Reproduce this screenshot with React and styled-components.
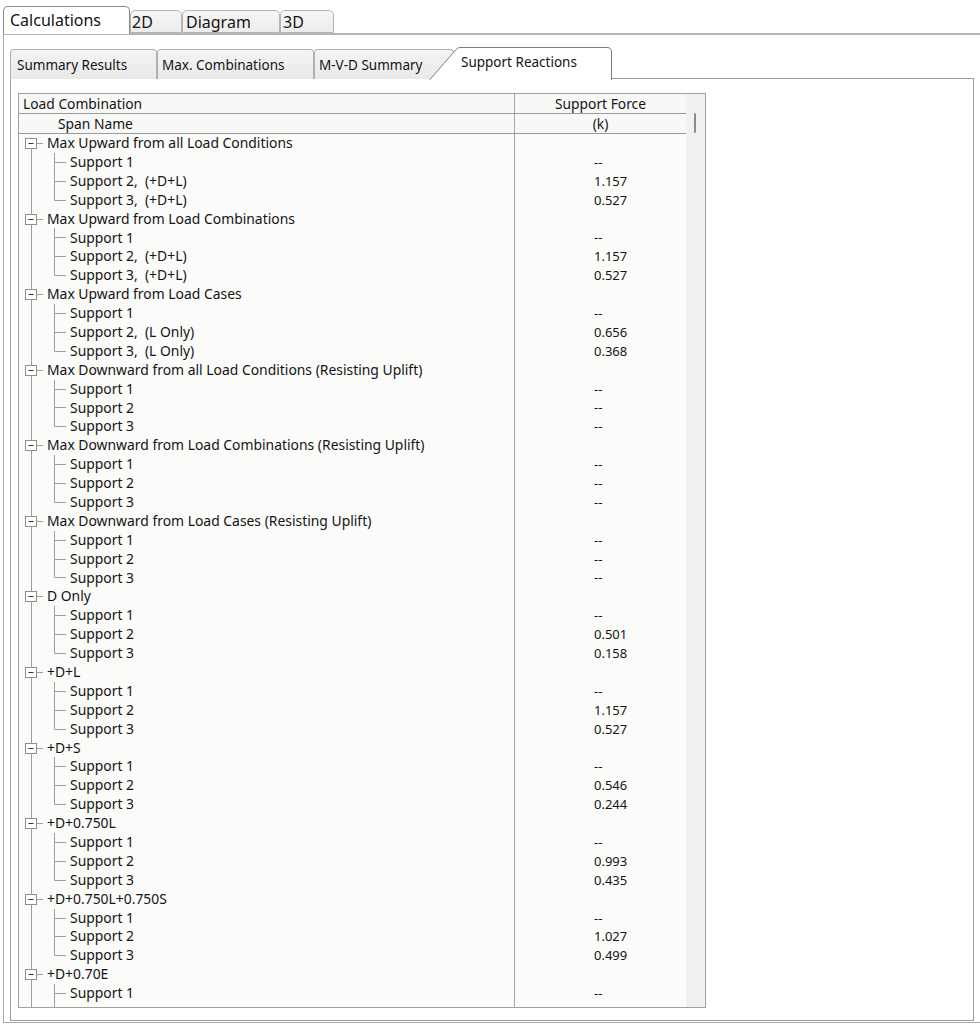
import styled, { createGlobalStyle } from "styled-components";

const GlobalStyle = createGlobalStyle`
  html, body {
    margin: 0;
    background: #ffffff;
  }
  body {
    font-family: "Noto Sans", "Open Sans", sans-serif;
    color: #141414;
  }
`;

const Window = styled.div`
  width: 980px;
  height: 1029px;
  padding: 6px 0 0 3px;
  box-sizing: border-box;
  overflow: hidden;
`;

const TopTabs = styled.div`
  display: flex;
  align-items: flex-end;
  height: 27px;
`;

const TopTab = styled.div`
  height: ${(p) => (p.$active ? "28px" : "23px")};
  width: ${(p) => p.$w}px;
  box-sizing: border-box;
  padding: 0 0 0 ${(p) => p.$pad}px;
  margin-bottom: ${(p) => (p.$active ? "-1px" : "0")};
  border: 1px solid ${(p) => (p.$active ? "#8c8c8c" : "#b4b4b4")};
  border-bottom: ${(p) => (p.$active ? "none" : "1px solid #b4b4b4")};
  border-radius: 5px 5px 0 0;
  background: ${(p) => (p.$active ? "#ffffff" : "linear-gradient(#f6f6f6, #ececec)")};
  font-size: 16px;
  line-height: ${(p) => (p.$active ? "26px" : "23px")};
  white-space: nowrap;
  position: relative;
  z-index: ${(p) => (p.$active ? 2 : 1)};
`;

const OuterPanel = styled.div`
  border: 1px solid #a8a8a8;
  border-top: 2px solid #b4b4b4;
  border-right: none;
  height: 990px;
  padding: 12px 0 0 6px;
  box-sizing: border-box;
`;

const InnerTabs = styled.div`
  display: flex;
  align-items: flex-end;
  height: 32px;
  position: relative;
  z-index: 2;
`;

const InnerTab = styled.div`
  width: ${(p) => p.$w}px;
  height: 30px;
  box-sizing: border-box;
  padding-left: ${(p) => p.$pad}px;
  border: 1px solid #b0b0b0;
  border-bottom: none;
  border-radius: 4px 4px 0 0;
  background: linear-gradient(#f4f4f4, #e9e9e9);
  font-size: 13.5px;
  line-height: 30px;
  white-space: nowrap;
  overflow: hidden;
  margin-right: ${(p) => p.$overlap || 0}px;
`;

const ActiveTab = styled.div`
  position: relative;
  z-index: 1;
  width: 183px;
  height: 33px;
  margin-bottom: -1px;
  box-sizing: border-box;
  padding-left: 32px;
  font-size: 13.5px;
  line-height: 30px;
  white-space: nowrap;

  svg {
    position: absolute;
    inset: 0;
    z-index: -1;
  }
`;

const InnerPanel = styled.div`
  width: 964px;
  height: 943px;
  box-sizing: border-box;
  border: 1px solid #9c9c9c;
  background: #ffffff;
  padding: 14px 0 0 7px;
  margin-top: -1px;
`;

const Table = styled.div`
  width: 688px;
  height: 915px;
  box-sizing: border-box;
  border: 1px solid #a0a0a0;
  background: #fbfbf9;
  display: flex;
  overflow: hidden;
`;

const Main = styled.div`
  flex: 1;
  display: flex;
  flex-direction: column;
`;

const HeaderRow = styled.div`
  display: grid;
  grid-template-columns: 496px 1fr;
  flex: none;
  height: ${(p) => p.$h}px;
  border-bottom: 1px solid #9a9a9a;
  background: #f8f8f6;
  font-size: 13.8px;
  line-height: ${(p) => p.$h}px;
`;

const HeadCell = styled.div`
  padding-left: ${(p) => p.$pad || 0}px;
  text-align: ${(p) => (p.$center ? "center" : "left")};
  border-right: ${(p) => (p.$divider ? "1px solid #a8a8a8" : "none")};
  white-space: nowrap;
`;

const Body = styled.div`
  flex: 1;
  overflow: hidden;
`;

const Row = styled.div`
  display: grid;
  grid-template-columns: 496px 1fr;
  height: 18.9px;
  line-height: 18.9px;
`;

const NameCell = styled.div`
  display: flex;
  align-items: center;
  border-right: 1px solid #a8a8a8;
  font-size: 13.9px;
  white-space: pre;
`;

const ValueCell = styled.div`
  padding-left: 79px;
  font-size: 13px;
  white-space: nowrap;
`;

const Gutter = styled.svg`
  flex: none;
  display: block;
  margin-right: ${(p) => p.$gap}px;
`;

const Scrollbar = styled.div`
  width: 19px;
  background: #f0f0f0;
  position: relative;
`;

const Thumb = styled.div`
  position: absolute;
  left: 8px;
  top: 19px;
  width: 2px;
  height: 20px;
  border-radius: 1px;
  background: #8a8a8a;
`;

const LINE = "#9e9e9e";

function GroupLines({ first }) {
  return (
    <Gutter width="25" height="19" $gap={3}>
      {!first && <line x1="12.5" y1="0" x2="12.5" y2="4" stroke={LINE} />}
      <line x1="12.5" y1="15" x2="12.5" y2="19" stroke={LINE} />
      <rect x="6.5" y="4.5" width="11" height="10" fill="#ffffff" stroke="#8e8e8e" />
      <line x1="9.5" y1="9.5" x2="14.5" y2="9.5" stroke="#303030" />
      <line x1="18" y1="9.5" x2="24" y2="9.5" stroke={LINE} />
    </Gutter>
  );
}

function ChildLines({ last, stub }) {
  return (
    <Gutter width="47" height="19" $gap={4}>
      <line x1="12.5" y1="0" x2="12.5" y2="19" stroke={LINE} />
      <line x1="35.5" y1="0" x2="35.5" y2={last ? 9.5 : 19} stroke={LINE} />
      {!stub && <line x1="35.5" y1="9.5" x2="47" y2="9.5" stroke={LINE} />}
    </Gutter>
  );
}

const plain = (a, b, c) => [
  ["Support 1", a],
  ["Support 2", b],
  ["Support 3", c],
];

// the last group runs on past the bottom of the list, so its branch stays open
const groups = [
  {
    name: "Max Upward from all Load Conditions",
    items: [
      ["Support 1", "--"],
      ["Support 2,  (+D+L)", "1.157"],
      ["Support 3,  (+D+L)", "0.527"],
    ],
  },
  {
    name: "Max Upward from Load Combinations",
    items: [
      ["Support 1", "--"],
      ["Support 2,  (+D+L)", "1.157"],
      ["Support 3,  (+D+L)", "0.527"],
    ],
  },
  {
    name: "Max Upward from Load Cases",
    items: [
      ["Support 1", "--"],
      ["Support 2,  (L Only)", "0.656"],
      ["Support 3,  (L Only)", "0.368"],
    ],
  },
  { name: "Max Downward from all Load Conditions (Resisting Uplift)", items: plain("--", "--", "--") },
  { name: "Max Downward from Load Combinations (Resisting Uplift)", items: plain("--", "--", "--") },
  { name: "Max Downward from Load Cases (Resisting Uplift)", items: plain("--", "--", "--") },
  { name: "D Only", items: plain("--", "0.501", "0.158") },
  { name: "+D+L", items: plain("--", "1.157", "0.527") },
  { name: "+D+S", items: plain("--", "0.546", "0.244") },
  { name: "+D+0.750L", items: plain("--", "0.993", "0.435") },
  { name: "+D+0.750L+0.750S", items: plain("--", "1.027", "0.499") },
  { name: "+D+0.70E", items: [["Support 1", "--"]], more: true },
];

function SupportTree() {
  return (
    <Body>
      {groups.map((g, gi) => (
        <div key={g.name}>
          <Row>
            <NameCell>
              <GroupLines first={gi === 0} />
              {g.name}
            </NameCell>
            <ValueCell />
          </Row>
          {g.items.map(([label, value], i) => (
            <Row key={label}>
              <NameCell>
                <ChildLines last={!g.more && i === g.items.length - 1} />
                {label}
              </NameCell>
              <ValueCell>{value}</ValueCell>
            </Row>
          ))}
        </div>
      ))}
      <Row>
        <NameCell>
          <ChildLines stub />
        </NameCell>
        <ValueCell />
      </Row>
    </Body>
  );
}

export default function App() {
  return (
    <>
      <GlobalStyle />
      <Window>
        <TopTabs>
          <TopTab $active $w={127} $pad={6}>Calculations</TopTab>
          <TopTab $w={52} $pad={1}>2D</TopTab>
          <TopTab $w={98} $pad={3}>Diagram</TopTab>
          <TopTab $w={54} $pad={2}>3D</TopTab>
        </TopTabs>
        <OuterPanel>
          <InnerTabs>
            <InnerTab $w={147} $pad={6}>Summary Results</InnerTab>
            <InnerTab $w={157} $pad={4}>Max. Combinations</InnerTab>
            <InnerTab $w={140} $pad={4} $overlap={-25}>M-V-D Summary</InnerTab>
            <ActiveTab>
              <svg width="183" height="33" viewBox="0 0 183 33">
                <path
                  d="M0.5 33 L27 2.5 Q28.5 0.5 31 0.5 L178 0.5 Q182.5 0.5 182.5 5 L182.5 33"
                  fill="#ffffff"
                  stroke="#7e7e7e"
                />
              </svg>
              Support Reactions
            </ActiveTab>
          </InnerTabs>
          <InnerPanel>
            <Table>
              <Main>
                <HeaderRow $h={19}>
                  <HeadCell $pad={4} $divider>Load Combination</HeadCell>
                  <HeadCell $center>Support Force</HeadCell>
                </HeaderRow>
                <HeaderRow $h={19}>
                  <HeadCell $pad={39} $divider>Span Name</HeadCell>
                  <HeadCell $center>(k)</HeadCell>
                </HeaderRow>
                <SupportTree />
              </Main>
              <Scrollbar>
                <Thumb />
              </Scrollbar>
            </Table>
          </InnerPanel>
        </OuterPanel>
      </Window>
    </>
  );
}
